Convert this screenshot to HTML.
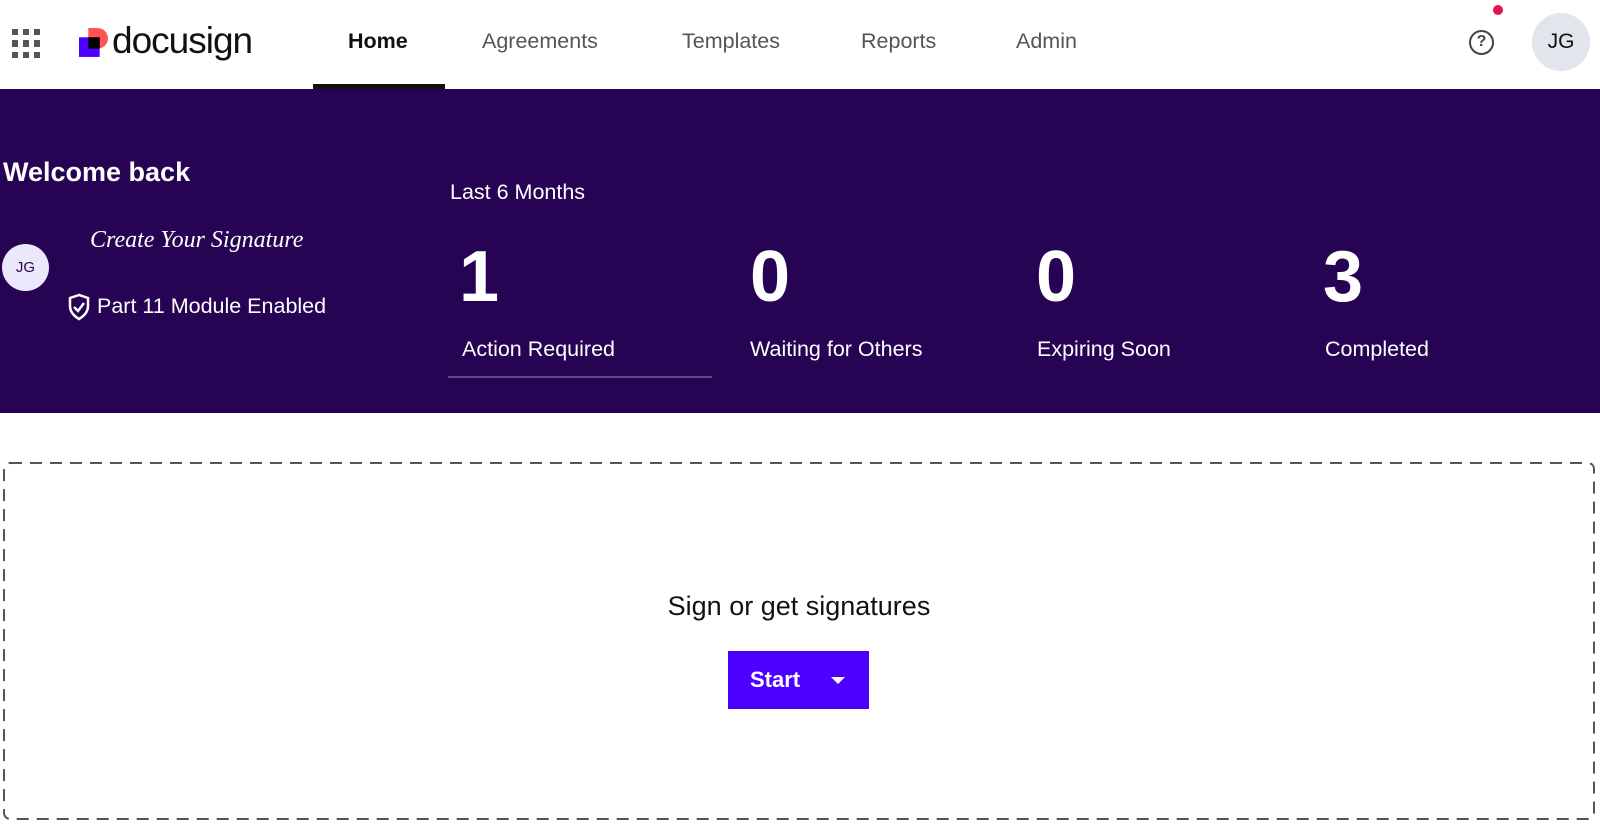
<!DOCTYPE html>
<html><head><meta charset="utf-8"><style>
*{margin:0;padding:0;box-sizing:border-box}
body{width:1600px;height:834px;background:#fff;font-family:"Liberation Sans",sans-serif;position:relative;overflow:hidden}
.a{position:absolute}
.nav{font-size:21.5px;color:#555;top:29px}
.w{color:#fff}
.num{font-size:72px;font-weight:bold;color:#fff;top:236px}
.lbl{font-size:21.5px;color:#fff;top:337px}
</style></head><body>
<div class="a" style="left:12px;top:29px;width:29px;height:29px;display:grid;grid-template-columns:repeat(3,6px);gap:5px">
<i style="background:#555"></i><i style="background:#555"></i><i style="background:#555"></i><i style="background:#555"></i><i style="background:#555"></i><i style="background:#555"></i><i style="background:#555"></i><i style="background:#555"></i><i style="background:#555"></i></div>
<svg class="a" style="left:79px;top:28px" width="31" height="31" viewBox="0 0 30 30"><path d="M9 0h9a10 10 0 0 1 0 20h-9z" fill="#ff5252"/><rect x="0" y="9" width="20" height="19" fill="#4c00ff"/><rect x="9" y="9" width="11" height="11" fill="#000"/></svg>
<div class="a" style="left:112px;top:20px;font-size:37px;color:#111;letter-spacing:-1px">docusign</div>
<div class="a nav" style="left:348px;color:#111;font-weight:bold">Home</div>
<div class="a" style="left:313px;top:84px;width:132px;height:5px;background:#111"></div>
<div class="a nav" style="left:482px">Agreements</div>
<div class="a nav" style="left:682px">Templates</div>
<div class="a nav" style="left:861px">Reports</div>
<div class="a nav" style="left:1016px">Admin</div>
<div class="a" style="left:1493px;top:5px;width:10px;height:10px;border-radius:50%;background:#e0154a"></div>
<div class="a" style="left:1469px;top:30px;width:25px;height:25px;border:2.5px solid #444;border-radius:50%;text-align:center;font-size:16px;font-weight:bold;color:#444;line-height:20px">?</div>
<div class="a" style="left:1532px;top:13px;width:58px;height:58px;border-radius:50%;background:#e1e5ec;text-align:center;line-height:58px;font-size:21px;color:#111">JG</div>
<div class="a" style="left:0;top:89px;width:1600px;height:324px;background:#260353"></div>
<div class="a w" style="left:3px;top:157px;font-size:27px;font-weight:bold">Welcome back</div>
<div class="a w" style="left:90px;top:227px;font-size:24px;font-family:'Liberation Serif',serif;font-style:italic">Create Your Signature</div>
<div class="a" style="left:2px;top:244px;width:47px;height:47px;border-radius:50%;background:#ece8fb;color:#260353;text-align:center;line-height:47px;font-size:15px">JG</div>
<svg class="a" style="left:67px;top:293px" width="24" height="28" viewBox="0 0 24 28"><path d="M12 2L3 5v8c0 6 4 10 9 13 5-3 9-7 9-13V5z" fill="none" stroke="#fff" stroke-width="2.5"/><path d="M7 14l4 4 6-8" fill="none" stroke="#fff" stroke-width="2.5"/></svg>
<div class="a w" style="left:97px;top:294px;font-size:21.5px">Part 11 Module Enabled</div>
<div class="a w" style="left:450px;top:180px;font-size:21.5px">Last 6 Months</div>
<div class="a num" style="left:459px">1</div>
<div class="a num" style="left:750px">0</div>
<div class="a num" style="left:1036px">0</div>
<div class="a num" style="left:1323px">3</div>
<div class="a lbl" style="left:462px">Action Required</div>
<div class="a lbl" style="left:750px">Waiting for Others</div>
<div class="a lbl" style="left:1037px">Expiring Soon</div>
<div class="a lbl" style="left:1325px">Completed</div>
<div class="a" style="left:448px;top:376px;width:264px;height:2px;background:#5a4a85"></div>
<svg class="a" style="left:3px;top:462px" width="1592" height="358"><rect x="1" y="1" width="1590" height="356" rx="6" fill="none" stroke="#555" stroke-width="2" stroke-dasharray="12 8"/></svg>
<div class="a" style="left:0;width:1598px;top:591px;text-align:center;font-size:27px;color:#111">Sign or get signatures</div>
<div class="a" style="left:728px;top:651px;width:141px;height:58px;background:#4c00ff;color:#fff;font-size:22px;font-weight:bold;line-height:58px;padding-left:22px">Start<span style="position:absolute;left:103px;top:26px;border:7px solid transparent;border-top:7px solid #fff;border-bottom:0"></span></div>
</body></html>
